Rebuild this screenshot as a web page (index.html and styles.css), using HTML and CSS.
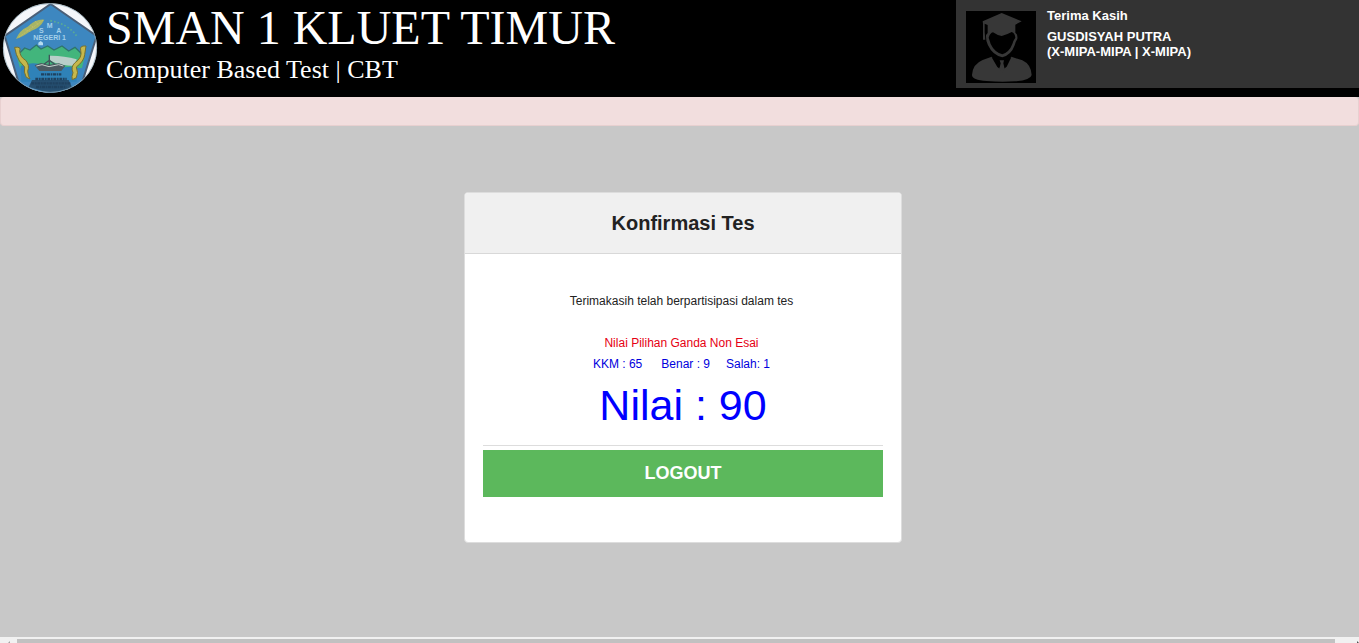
FILE: index.html
```html
<!DOCTYPE html>
<html lang="id">
<head>
<meta charset="utf-8">
<title>SMAN 1 KLUET TIMUR - Computer Based Test</title>
<link rel="stylesheet" href="styles.css">
</head>
<body>
<header class="header">
  <div class="brand">
    <svg class="logo" viewBox="0 0 300 291" role="img" aria-label="Logo sekolah">
      <defs>
        <clipPath id="disc"><ellipse cx="150" cy="144" rx="141" ry="134"/></clipPath>
        <clipPath id="shield"><path d="M152 12 290 108 244 255Q152 310 58 255L14 108Z"/></clipPath>
      </defs>
      <g clip-path="url(#disc)">
        <rect width="300" height="291" fill="#f4f6fa"/>
        <path d="M152 12 290 108 244 255Q152 310 58 255L14 108Z" fill="#3d87c0" stroke="#4a5f78" stroke-width="6"/>
        <g clip-path="url(#shield)">
          <path d="M50 168 74 144 90 150 109 135 123 147 143 138 162 150 186 138 206 153 225 142 254 170 246 204H60Z" fill="#42b57c"/>
          <path d="M50 168 74 144 90 150 109 135 123 147 143 138 162 150 186 138 206 153 225 142 254 170" fill="none" stroke="#2f746c" stroke-width="4"/>
          <path d="M148 167Q190 166 230 178L226 198Q177 196 151 182Z" fill="#b9cfc9"/>
          <path d="M62 198Q95 183 130 195T230 199V245H64Z" fill="#2f82b8"/>
          <path d="M104 196 123 189 147 194 177 190 196 197 184 213H118Z" fill="#4c5961"/>
          <path d="M109 198 126 194 147 200 176 194 190 198" fill="none" stroke="#c4cfcb" stroke-width="3"/>
          <path d="M148 164V197M132 193 148 181 164 193" fill="none" stroke="#41545b" stroke-width="4"/>
          <path d="M96 240H206L217 264 151 280 86 261Z" fill="#264f70"/>
          <path d="M123 223H184M106 237H200M94 250H211M108 261H199" fill="none" stroke="#1f4260" stroke-width="7" stroke-dasharray="9 2 5 2"/>
        </g>
        <path d="M48 117Q59 90 83 80 108 56 133 59 121 84 91 94 68 111 48 117Z" fill="#a6b565"/>
        <path d="M57 111 129 61M76 89 91 94M91 75 103 84M106 64 115 75" stroke="#c4bd68" stroke-width="3" stroke-dasharray="4 2"/>
        <path d="M151 62Q206 73 230 108" fill="none" stroke="#5aac94" stroke-width="5" stroke-dasharray="5 6"/>
        <path d="M44 142Q65 139 59 153 60 171 77 181 90 196 83 214 84 229 90 237L79 232Q70 216 74 201 55 184 49 163Z" fill="#c6b84c" stroke="#77702e" stroke-width="3"/>
        <path d="M258 138Q238 136 242 151 248 173 225 188 211 201 219 218 214 230 217 239L229 233Q236 218 229 201 252 184 254 164Z" fill="#c6b84c" stroke="#77702e" stroke-width="3"/>
        <g class="logo-text" text-anchor="middle">
          <text x="149" y="84">M</text><text x="124" y="98">S</text><text x="176" y="98">A</text>
          <text x="149" y="120">NEGERI 1</text>
        </g>
        <path d="M115 128 122 123 129 128V136H115Z" fill="#b6dcef"/>
      </g>
      <ellipse cx="150" cy="144" rx="140" ry="133" fill="none" stroke="#8ba6b4" stroke-width="2"/>
    </svg>
    <div>
      <h1 class="school">SMAN 1 KLUET TIMUR</h1>
      <p class="tagline">Computer Based Test | CBT</p>
    </div>
  </div>
  <div class="student">
    <svg class="avatar" viewBox="0 0 210 216" role="img" aria-label="Foto peserta">
      <rect width="210" height="216" fill="#000"/>
      <g fill="#373737">
        <path d="M50 31 107 6 167 31 148 41V65Q156 70 154 84 148 93 146 103 136 132 109 139 80 133 66 103 59 91 60 72L65 66V42L56 38V63L58 86H51V38Z"/>
        <path d="M18 192Q20 159 50 147L77 137 105 174 136 137 169 148Q195 160 197 192 194 208 146 211 105 214 62 210 18 207 18 192Z"/>
      </g>
      <path d="M68 80Q72 66 81 64 92 72 107 75 125 70 137 63 147 67 148 80 142 88 139 99 130 123 109 130 86 124 74 99Z" fill="#000"/>
      <path d="M77 139 103 148 101 173 94 168ZM136 139 112 148 114 173 122 167Z" fill="#000"/>
      <path d="M101 148H114L112 157 116 174 108 186 100 174 104 157Z" fill="#373737"/>
    </svg>
    <div class="student-info">
      <p class="greeting">Terima Kasih</p>
      <p>GUSDISYAH PUTRA</p>
      <p>(X-MIPA-MIPA | X-MIPA)</p>
    </div>
  </div>
</header>
<div class="notice"></div>
<main class="main">
  <section class="card">
    <h2 class="card-title">Konfirmasi Tes</h2>
    <div class="card-body">
      <p class="thanks">Terimakasih telah berpartisipasi dalam tes</p>
      <p class="caption">Nilai Pilihan Ganda Non Esai</p>
      <p class="stats"><span>KKM : 65</span><span class="correct">Benar : 9</span><span>Salah: 1</span></p>
      <p class="score">Nilai : 90</p>
      <hr class="rule">
      <button class="logout" type="button">LOGOUT</button>
    </div>
  </section>
</main>
<div class="scrollbar" aria-hidden="true">
  <svg class="arrow" viewBox="0 0 17 6"><path d="M10 4V6H8Z" fill="#a3a3a3"/></svg>
  <div class="thumb"></div>
  <svg class="arrow arrow-end" viewBox="0 0 17 6"><path d="M15 4V6H17Z" fill="#505050"/></svg>
</div>
</body>
</html>
```
FILE: styles.css
```css
* { box-sizing: border-box; }
body {
  margin: 0;
  min-height: 100vh;
  display: flex;
  flex-direction: column;
  background: #c8c8c8;
  color: #222;
  font: 12px/20px "Liberation Sans", Arial, sans-serif;
}
h1, h2, p { margin: 0; }
.header {
  display: flex;
  justify-content: space-between;
  align-items: flex-start;
  background: #000;
  color: #fff;
}
.brand {
  display: flex;
  gap: 6px;
  font-family: "Liberation Serif", "Times New Roman", serif;
}
.logo { display: block; width: 100px; height: 97px; }
.logo-text { font: bold 21px "Liberation Sans", Arial, sans-serif; fill: #a3d0ea; }
.school { font-size: 48px; font-weight: 400; line-height: 56px; }
.tagline { font-size: 26px; line-height: 28px; }
.student {
  display: flex;
  align-items: flex-start;
  gap: 11px;
  width: 403px;
  height: 88px;
  padding: 8px 10px 0;
  background: #333;
}
.avatar { width: 70px; height: 72px; margin-top: 3px; }
.student-info { font-size: 13px; font-weight: 700; line-height: 15px; }
.greeting { margin-bottom: 6px; }
.notice {
  height: 29px;
  background: #f2dede;
  border: 1px solid #e8d0d0;
  border-top: 0;
  border-radius: 4px;
}
.main { flex: 1; padding: 66px 0 0 7px; }
.card {
  width: 438px;
  max-width: 100%;
  margin: 0 auto;
  background: #fff;
  border: 1px solid #ddd;
  border-radius: 4px;
  overflow: hidden;
  text-align: center;
}
.card-title {
  padding: 15px;
  background: #f0f0f0;
  border-bottom: 1px solid #d8d8d8;
  font-size: 20px;
  line-height: 30px;
}
.card-body { padding: 37px 18px 45px; }
.thanks, .caption, .stats { padding-right: 3px; }
.thanks { margin-bottom: 22px; }
.caption { color: #e60012; }
.stats { display: flex; justify-content: center; gap: 16px; line-height: 22px; color: #00d; }
.correct { padding-left: 3px; }
.score { font-size: 43px; line-height: 60px; color: #00f; }
.rule { margin: 10px 0 4px; border: 0; border-top: 1px solid #ddd; }
.logout {
  display: block;
  width: 100%;
  padding: 12px;
  border: 0;
  background: #5cb85c;
  color: #fff;
  font: bold 18px/23px "Liberation Sans", Arial, sans-serif;
}
.scrollbar { display: flex; height: 6px; background: #f1f1f1; }
.thumb { flex: 1; height: 4px; margin-top: 2px; background: #c1c1c1; }
.arrow { width: 17px; height: 6px; }
.arrow-end { margin-left: 7px; }
.student-info { padding-top: 0; }
```
